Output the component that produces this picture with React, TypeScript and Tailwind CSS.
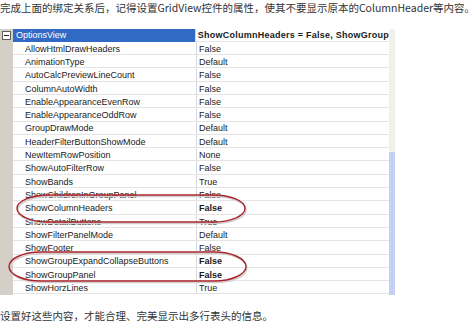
import React from "react";

type Row = { name: string; value: string; bold?: boolean };

const rows: Row[] = [
  { name: "AllowHtmlDrawHeaders", value: "False" },
  { name: "AnimationType", value: "Default" },
  { name: "AutoCalcPreviewLineCount", value: "False" },
  { name: "ColumnAutoWidth", value: "False" },
  { name: "EnableAppearanceEvenRow", value: "False" },
  { name: "EnableAppearanceOddRow", value: "False" },
  { name: "GroupDrawMode", value: "Default" },
  { name: "HeaderFilterButtonShowMode", value: "Default" },
  { name: "NewItemRowPosition", value: "None" },
  { name: "ShowAutoFilterRow", value: "False" },
  { name: "ShowBands", value: "True" },
  { name: "ShowChildrenInGroupPanel", value: "False" },
  { name: "ShowColumnHeaders", value: "False", bold: true },
  { name: "ShowDetailButtons", value: "True" },
  { name: "ShowFilterPanelMode", value: "Default" },
  { name: "ShowFooter", value: "False" },
  { name: "ShowGroupExpandCollapseButtons", value: "False", bold: true },
  { name: "ShowGroupPanel", value: "False", bold: true },
  { name: "ShowHorzLines", value: "True" },
];

const cjk = { fontFamily: '"Noto Sans CJK SC", "Liberation Sans", sans-serif' };
const grid = { fontFamily: '"Liberation Sans", Tahoma, sans-serif' };

const App: React.FC = () => {
  return (
    <div className="w-[474px] h-[328px] bg-white overflow-hidden relative">
      {/* 上方说明文字 */}
      <p className="text-[10.5px] leading-[14px] text-[#333] pt-[1px] whitespace-nowrap" style={cjk}>
        完成上面的绑定关系后，记得设置GridView控件的属性，使其不要显示原本的ColumnHeader等内容。
      </p>

      {/* PropertyGrid 截图 */}
      <div className="mt-[13.5px] flex w-[395px] h-[266px] overflow-hidden" style={grid}>
        <div className="w-[13px] bg-[#d4d0c8] flex flex-col">
          <div className="h-[13.3px] flex items-center justify-center">
            <div className="w-[9px] h-[9px] border border-[#5f5f5f] bg-white flex items-center justify-center">
              <div className="w-[5px] h-[1px] bg-[#222]" />
            </div>
          </div>
        </div>

        <div className="w-[376px] flex flex-col text-[9px] text-[#1a1a1a]">
          <div className="h-[13.3px] flex shrink-0">
            <div className="w-[183px] bg-[#316ac5] text-white pl-[3px] pt-[2px] flex items-center">OptionsView</div>
            <div className="flex-1 border-l border-[#d8d8d8] border-b border-b-[#e6e6e6] bg-white font-bold pl-[2px] pt-[2px] tracking-[0.25px] flex items-center whitespace-nowrap">
              ShowColumnHeaders = False, ShowGroup
            </div>
          </div>
          {rows.map((r) => (
            <div key={r.name} className="h-[13.3px] flex shrink-0 border-b border-[#e4e4e4]">
              <div className="w-[183px] pl-[12px] pt-[3px] flex items-center whitespace-nowrap">{r.name}</div>
              <div className={`flex-1 border-l border-[#d8d8d8] pl-[2px] pt-[3px] flex items-center ${r.bold ? "font-bold" : ""}`}>
                {r.value}
              </div>
            </div>
          ))}
        </div>

        <div className="w-[6px] flex flex-col">
          <div className="h-[123px] bg-[#f1f0ea]" />
          <div className="flex-1 bg-[#c3d2f4]" />
        </div>
      </div>

      {/* 红色圈注 */}
      <svg className="absolute left-0 top-0 pointer-events-none" width="474" height="328">
        <rect x="17" y="195" width="228" height="27" rx="32" ry="13.5" fill="none" stroke="#cfcfcf" strokeWidth="1.5" transform="translate(1 1.5)" />
        <rect x="17" y="195" width="228" height="27" rx="32" ry="13.5" fill="none" stroke="#ad2229" strokeWidth="1.4" />
        <rect x="9" y="252" width="237" height="29" rx="32" ry="14.5" fill="none" stroke="#cfcfcf" strokeWidth="1.5" transform="translate(1 1.5)" />
        <rect x="9" y="252" width="237" height="29" rx="32" ry="14.5" fill="none" stroke="#ad2229" strokeWidth="1.4" />
      </svg>

      {/* 下方说明文字 */}
      <p className="mt-[14.5px] text-[10.5px] leading-[14px] text-[#333] whitespace-nowrap" style={cjk}>
        设置好这些内容，才能合理、完美显示出多行表头的信息。
      </p>
    </div>
  );
};

export default App;
